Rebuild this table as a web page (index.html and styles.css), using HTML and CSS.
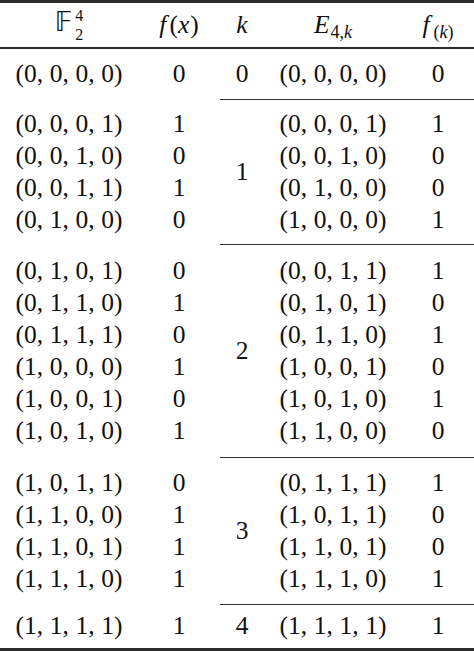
FILE: index.html
```
<!DOCTYPE html>
<html lang="en">
<head>
<meta charset="utf-8">
<title>Table</title>
<link rel="stylesheet" href="styles.css">
</head>
<body>
<table class="tbl">
  <colgroup><col class="c1"><col class="c2"><col class="c3"><col class="c4"><col class="c5"></colgroup>
  <thead>
    <tr>
      <th><span class="bb">𝔽</span><span class="ss"><span>4</span><span>2</span></span></th>
      <th><i class="fi">f</i>(<i class="xi">x</i>)</th>
      <th><i>k</i></th>
      <th><i>E</i><sub class="sb">4,<i>k</i></sub></th>
      <th><i class="fi">f</i><sub class="sb">(<i>k</i>)</sub></th>
    </tr>
  </thead>
  <tbody class="g g0">
    <tr><td>(0, 0, 0, 0)</td><td>0</td><td>0</td><td>(0, 0, 0, 0)</td><td>0</td></tr>
  </tbody>
  <tbody class="g gb g1">
    <tr><td>(0, 0, 0, 1)</td><td>1</td><td rowspan="4" class="k">1</td><td>(0, 0, 0, 1)</td><td>1</td></tr>
    <tr><td>(0, 0, 1, 0)</td><td>0</td><td>(0, 0, 1, 0)</td><td>0</td></tr>
    <tr><td>(0, 0, 1, 1)</td><td>1</td><td>(0, 1, 0, 0)</td><td>0</td></tr>
    <tr><td>(0, 1, 0, 0)</td><td>0</td><td>(1, 0, 0, 0)</td><td>1</td></tr>
  </tbody>
  <tbody class="g gb g2">
    <tr><td>(0, 1, 0, 1)</td><td>0</td><td rowspan="6" class="k">2</td><td>(0, 0, 1, 1)</td><td>1</td></tr>
    <tr><td>(0, 1, 1, 0)</td><td>1</td><td>(0, 1, 0, 1)</td><td>0</td></tr>
    <tr><td>(0, 1, 1, 1)</td><td>0</td><td>(0, 1, 1, 0)</td><td>1</td></tr>
    <tr><td>(1, 0, 0, 0)</td><td>1</td><td>(1, 0, 0, 1)</td><td>0</td></tr>
    <tr><td>(1, 0, 0, 1)</td><td>0</td><td>(1, 0, 1, 0)</td><td>1</td></tr>
    <tr><td>(1, 0, 1, 0)</td><td>1</td><td>(1, 1, 0, 0)</td><td>0</td></tr>
  </tbody>
  <tbody class="g gb g3">
    <tr><td>(1, 0, 1, 1)</td><td>0</td><td rowspan="4" class="k">3</td><td>(0, 1, 1, 1)</td><td>1</td></tr>
    <tr><td>(1, 1, 0, 0)</td><td>1</td><td>(1, 0, 1, 1)</td><td>0</td></tr>
    <tr><td>(1, 1, 0, 1)</td><td>1</td><td>(1, 1, 0, 1)</td><td>0</td></tr>
    <tr><td>(1, 1, 1, 0)</td><td>1</td><td>(1, 1, 1, 0)</td><td>1</td></tr>
  </tbody>
  <tbody class="g gb g4">
    <tr><td>(1, 1, 1, 1)</td><td>1</td><td>4</td><td>(1, 1, 1, 1)</td><td>1</td></tr>
  </tbody>
</table>
</body>
</html>
```
FILE: styles.css
```
html, body {
  margin: 0;
  padding: 0;
  background: #ffffff;
}

.tbl {
  width: 474px;
  table-layout: fixed;
  border-collapse: separate;
  border-spacing: 0;
  border-top: 3px solid #2b2b2b;
  font-family: "Liberation Serif", "Times New Roman", serif;
  font-size: 25.5px;
  color: #111111;
}

.c1 { width: 138px; }
.c2 { width: 82px; }
.c3 { width: 44px; }
.c4 { width: 138px; }
.c5 { width: 72px; }

th {
  height: 44px;
  padding: 0;
  font-weight: normal;
  text-align: center;
  vertical-align: middle;
  line-height: 1;
  border-bottom: 2px solid #2b2b2b;
  white-space: nowrap;
}

td {
  padding: 0;
  height: 32px;
  line-height: 32px;
  text-align: center;
  vertical-align: middle;
  white-space: nowrap;
  word-spacing: 0.3px;
}

.bb {
  font-family: "DejaVu Sans", "DejaVu Serif", sans-serif;
  font-size: 26px;
  line-height: 1;
}

.ss {
  display: inline-flex;
  flex-direction: column;
  font-size: 16px;
  line-height: 19px;
  vertical-align: 10px;
  margin-left: 3px;
}

.fi { margin-right: 3px; }
.xi { margin-right: 1px; }

.sb {
  font-size: 18px;
  line-height: 0;
  vertical-align: -5px;
  margin-left: 1px;
}

.g0 td { padding: 9px 0; }

.gb tr:first-child td { border-top: 1px solid transparent; }
.gb tr:first-child td:nth-child(n+3) { border-top-color: #333333; }

.g1 tr:first-child td { padding-top: 8px; }
.g1 tr:last-child td { padding-bottom: 8px; }
.g2 tr:first-child td { padding-top: 10px; }
.g2 tr:last-child td { padding-bottom: 10px; }
.g3 tr:first-child td { padding-top: 9px; }
.g3 tr:last-child td { padding-bottom: 9px; }
.g4 td { padding-top: 5px; padding-bottom: 6px; border-bottom: 3px solid #2b2b2b; }

.g tr td.k {
  padding: 0;
  vertical-align: middle;
}
```
